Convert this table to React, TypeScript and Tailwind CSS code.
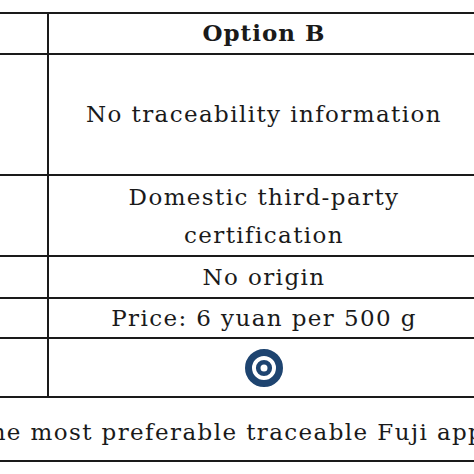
export default function App() {
  const font = { fontFamily: '"DejaVu Serif", "Liberation Serif", serif' }
  const line = "border-[#1a1a1a]"
  const cell = "flex-1 flex items-center justify-center text-[23px] tracking-[1.4px]"
  return (
    <div className="w-[474px] h-[474px] overflow-hidden bg-white text-[#1a1a1a]" style={font}>
      <div className="w-[479px] pt-[12px]">
        <div className={`border-t-2 ${line}`}>
          {/* header */}
          <div className={`flex h-[41px] border-b-2 ${line}`}>
            <div className={`w-[49px] border-r-2 ${line}`} />
            <div className="flex-1 flex items-center justify-center font-bold text-[23px] tracking-[1px]">Option B</div>
          </div>
          <div className={`flex h-[121px] border-b-2 ${line}`}>
            <div className={`w-[49px] border-r-2 ${line}`} />
            <div className={cell}>No traceability information</div>
          </div>
          <div className={`flex h-[81px] border-b-2 ${line}`}>
            <div className={`w-[49px] border-r-2 ${line}`} />
            <div className={`${cell} text-center leading-[38px]`}>
              Domestic third-party
              <br />
              certification
            </div>
          </div>
          <div className={`flex h-[42px] border-b-2 ${line}`}>
            <div className={`w-[49px] border-r-2 ${line}`} />
            <div className={cell}>No origin</div>
          </div>
          <div className={`flex h-[40px] border-b-2 ${line}`}>
            <div className={`w-[49px] border-r-2 ${line}`} />
            <div className={cell}>Price: 6 yuan per 500 g</div>
          </div>
          <div className={`flex h-[59px] border-b-2 ${line}`}>
            <div className={`w-[49px] border-r-2 ${line}`} />
            <div className="flex-1 flex items-center justify-center">
              <svg width="38" height="38" viewBox="0 0 38 38">
                <circle cx="19" cy="19" r="15.5" fill="none" stroke="#1e4470" strokeWidth="7" />
                <circle cx="19" cy="19" r="5.8" fill="none" stroke="#1e4470" strokeWidth="4.6" />
              </svg>
            </div>
          </div>
        </div>
        <div className={`h-[64px] border-b-2 ${line} flex items-center overflow-hidden`}>
          <div className="whitespace-nowrap text-[23px] tracking-[1.4px] ml-[-20px] pt-[6px]">the most preferable traceable Fuji apple</div>
        </div>
      </div>
    </div>
  )
}
